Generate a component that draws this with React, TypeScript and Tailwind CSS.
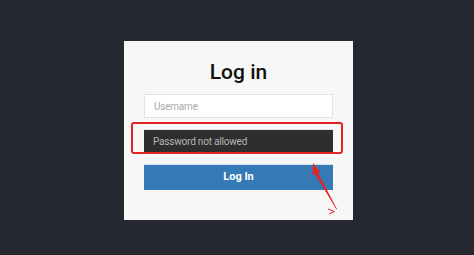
import React from "react";

export default function App() {
  return (
    <div
      className="w-[474px] h-[255px] bg-[#252830] pt-[41px] pl-[124px] overflow-hidden"
      style={{ fontFamily: "Roboto, 'Liberation Sans', sans-serif" }}
    >
      <div className="relative w-[229px] h-[179px] bg-[#f7f7f7] px-[20px] pt-[17px] flex flex-col">
        <h1 className="h-[28px] leading-[28px] text-center text-[21px] font-medium text-[#111]">
          Log in
        </h1>
        <div className="mt-[8px] h-[24px] bg-white border border-[#e2e2e2] flex items-center pl-[9px] text-[10px] tracking-[-0.2px] text-[#a9a9a9]">
          Username
        </div>
        <div className="relative mt-[11px]">
          <div className="h-[24px] bg-[#2e2e2e] border-t border-[#d6e6f2] flex items-center pl-[9px] text-[10px] tracking-[-0.2px] text-[#b5b5b5]">
            Password not allowed
          </div>
          <div className="absolute left-[-13px] top-[-7px] w-[212px] h-[32px] border-2 border-[#e32424] rounded-[3px]" />
        </div>
        <button className="mt-[11px] h-[26px] bg-[#337ab7] border-t border-[#cfe3f3] text-white text-[11px] font-bold">
          Log In
        </button>
        <svg
          className="absolute left-0 top-0 pointer-events-none"
          width="229"
          height="179"
          viewBox="0 0 229 179"
        >
          <path d="M189 122 L196 131 L194 132 L213 168 L212.5 168.5 L191 133 L188.5 134 Z" fill="#e8231f" />
          <path d="M204 168 L210.5 170.5 L205 173" fill="none" stroke="#e8231f" strokeWidth="1" />
        </svg>
      </div>
    </div>
  );
}
